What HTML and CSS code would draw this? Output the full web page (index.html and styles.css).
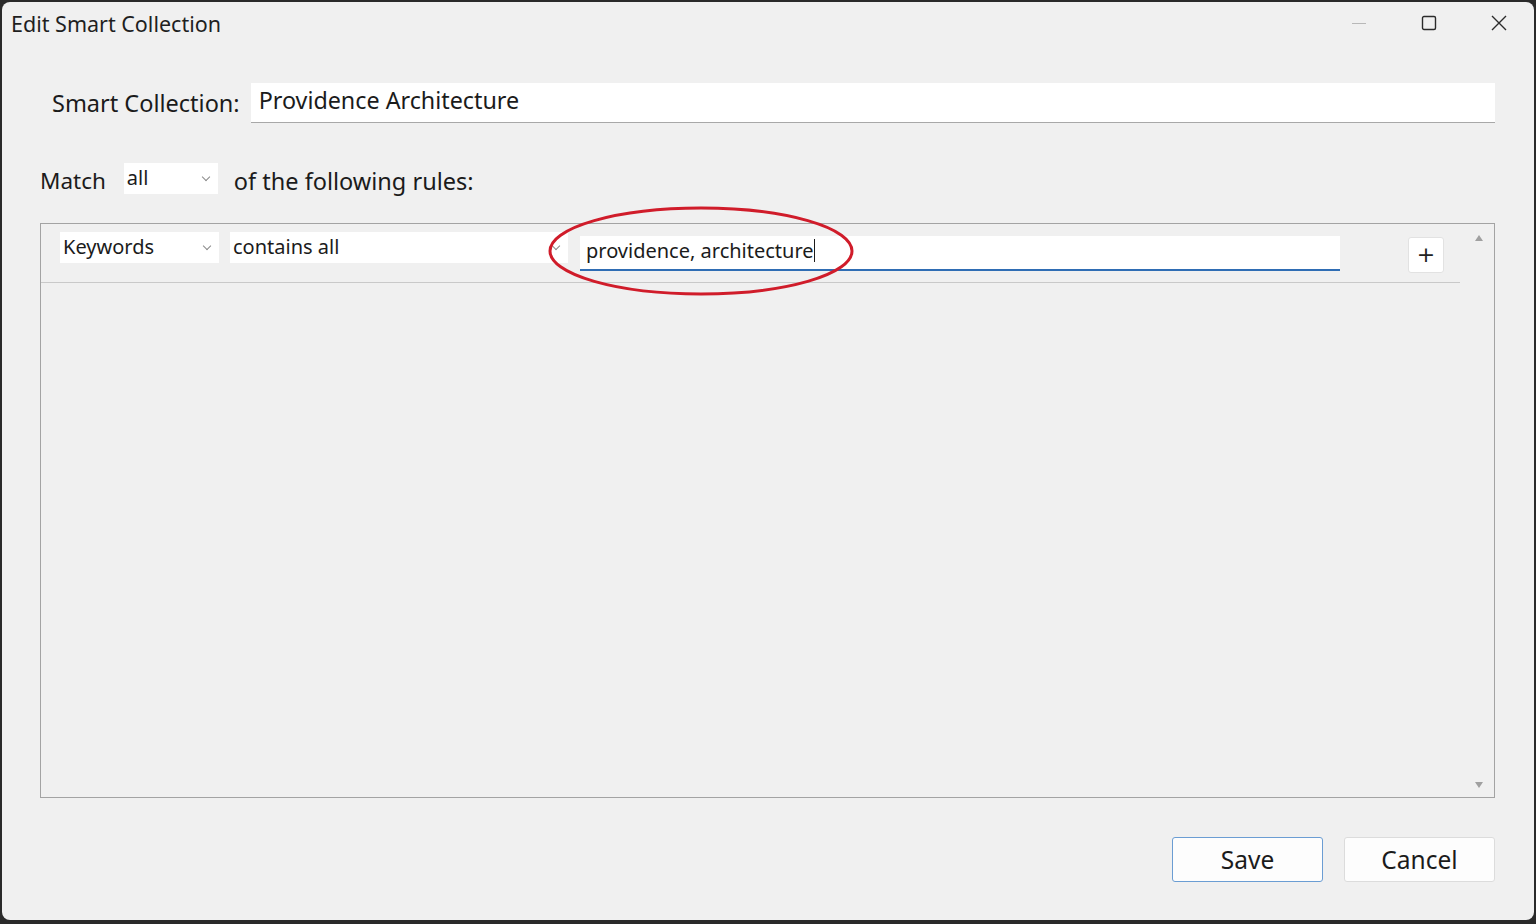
FILE: index.html
```html
<!DOCTYPE html>
<html>

<head>
    <title>Edit Smart Collection</title>
    <meta charset="UTF-8">
    <link rel="stylesheet" href="styles.css">
</head>

<body>
    <div class="window">
        <div class="titlebar">
            <span class="title">Edit Smart Collection</span>
            <div class="caption-buttons">
                <span class="cap-btn">
                    <svg width="16" height="16" viewBox="0 0 16 16"><path d="M1 8.5h14" stroke="#b8b8b8" stroke-width="1.2" fill="none"/></svg>
                </span>
                <span class="cap-btn">
                    <svg width="16" height="16" viewBox="0 0 16 16"><rect x="1.5" y="1.5" width="13" height="13" rx="1.5" stroke="#2b2b2b" stroke-width="1.4" fill="none"/></svg>
                </span>
                <span class="cap-btn">
                    <svg width="18" height="18" viewBox="0 0 18 18"><path d="M2 2l14 14M16 2L2 16" stroke="#2b2b2b" stroke-width="1.4" fill="none"/></svg>
                </span>
            </div>
        </div>

        <div class="content">
            <div class="name-row">
                <label>Smart Collection:</label>
                <div class="name-input">Providence Architecture</div>
            </div>

            <div class="match-row">
                <span class="match-label">Match</span>
                <div class="select select-match">all<span class="chev"></span></div>
                <span>of the following rules:</span>
            </div>

            <div class="rules">
                <div class="rules-list">
                    <div class="rule">
                        <div class="select select-field">Keywords<span class="chev"></span></div>
                        <div class="select select-op">contains all<span class="chev"></span></div>
                        <div class="value-input">providence, architecture<span class="caret"></span>
                            <svg class="highlight" width="310" height="92" viewBox="0 0 310 92">
                                <ellipse cx="155" cy="46" rx="151" ry="43" stroke="#d01c2a" stroke-width="3" fill="none"/>
                            </svg>
                        </div>
                        <button class="add-btn">+</button>
                    </div>
                </div>
                <div class="scrollbar">
                    <span class="arrow up"></span>
                    <span class="arrow down"></span>
                </div>
            </div>

            <div class="actions">
                <button class="btn primary">Save</button>
                <button class="btn">Cancel</button>
            </div>
        </div>
    </div>
</body>

</html>
```

FILE: styles.css
```css
body {
    margin: 0;
    padding: 0;
    background-color: #2a2a2a;
    font-family: "Noto Sans", "Open Sans", sans-serif;
    color: #1b1b1b;
}

.window {
    width: 1532px;
    height: 918px;
    margin: 2px 2px 4px 2px;
    background-color: #f0f0f0;
    border-radius: 8px;
    overflow: hidden;
    display: flex;
    flex-direction: column;
}

.titlebar {
    height: 42px;
    display: flex;
    align-items: center;
    justify-content: space-between;
    padding-left: 9px;
}

.title {
    font-size: 21.5px;
    color: #1f1f1f;
}

.caption-buttons {
    display: flex;
    height: 100%;
}

.cap-btn {
    width: 70px;
    display: flex;
    align-items: center;
    justify-content: center;
}

.content {
    flex-grow: 1;
    padding: 39px 39px 0 38px;
    display: flex;
    flex-direction: column;
}

.name-row {
    display: flex;
    align-items: center;
    padding-left: 12px;
    height: 40px;
}

.name-row label {
    font-size: 23.5px;
    margin-right: 11px;
    white-space: nowrap;
}

.name-input {
    flex-grow: 1;
    height: 40px;
    background-color: #fff;
    border-bottom: 1px solid #a8a8a8;
    box-sizing: border-box;
    font-size: 23.3px;
    line-height: 34px;
    padding-left: 8px;
}

.match-row {
    display: flex;
    align-items: center;
    margin-top: 40px;
    height: 31px;
    font-size: 23.5px;
}

.match-row > span {
    padding-top: 4px;
}

.match-label {
    font-size: 22.5px;
}

.select {
    position: relative;
    background-color: #fff;
    height: 31px;
    line-height: 29px;
    padding-left: 3px;
    font-size: 20px;
    box-sizing: border-box;
}

.chev {
    position: absolute;
    right: 9px;
    top: 11px;
    width: 5px;
    height: 5px;
    border-right: 1px solid #8a8a8a;
    border-bottom: 1px solid #8a8a8a;
    transform: rotate(45deg);
}

.select-match {
    width: 94px;
    margin: 0 16px 0 18px;
    font-size: 20px;
    line-height: 29px;
}

.rules {
    margin-top: 29px;
    height: 575px;
    border: 1px solid #a3a3a3;
    display: flex;
    box-sizing: border-box;
}

.rules-list {
    flex-grow: 1;
}

.rule {
    height: 59px;
    border-bottom: 1px solid #c9c9c9;
    display: flex;
    align-items: flex-start;
    padding-left: 19px;
    box-sizing: border-box;
}

.select-field {
    width: 159px;
    margin-top: 8px;
}

.select-op {
    width: 338px;
    margin: 8px 0 0 11px;
}

.value-input {
    position: relative;
    width: 760px;
    height: 35px;
    margin: 12px 0 0 12px;
    background-color: #fff;
    border-bottom: 2px solid #2f6db4;
    box-sizing: border-box;
    padding-left: 6px;
    font-size: 20px;
    line-height: 30px;
}

.caret {
    display: inline-block;
    width: 1px;
    height: 23px;
    background-color: #1b1b1b;
    vertical-align: -4px;
}

.highlight {
    position: absolute;
    left: -34px;
    top: -31px;
}

.add-btn {
    width: 36px;
    height: 36px;
    margin: 13px 0 0 68px;
    background-color: #fff;
    border: 1px solid #e2e2e2;
    border-radius: 3px;
    font-family: "DejaVu Sans", sans-serif;
    font-size: 22px;
    line-height: 30px;
    padding: 0;
    color: #222;
}

.scrollbar {
    width: 34px;
    display: flex;
    flex-direction: column;
    justify-content: space-between;
    align-items: center;
    padding: 11px 0 9px 4px;
    box-sizing: border-box;
}

.arrow {
    width: 0;
    height: 0;
    border-left: 4px solid transparent;
    border-right: 4px solid transparent;
}

.arrow.up {
    border-bottom: 6px solid #a0a0a0;
}

.arrow.down {
    border-top: 6px solid #a0a0a0;
}

.actions {
    display: flex;
    justify-content: flex-end;
    gap: 21px;
    margin-top: 39px;
}

.btn {
    width: 151px;
    height: 45px;
    background-color: #fdfdfd;
    border: 1px solid #dcdcdc;
    border-radius: 3px;
    font-family: "Noto Sans", "Open Sans", sans-serif;
    font-size: 24.5px;
    color: #1b1b1b;
    padding: 0;
}

.btn.primary {
    border-color: #6b9dd3;
}
```
